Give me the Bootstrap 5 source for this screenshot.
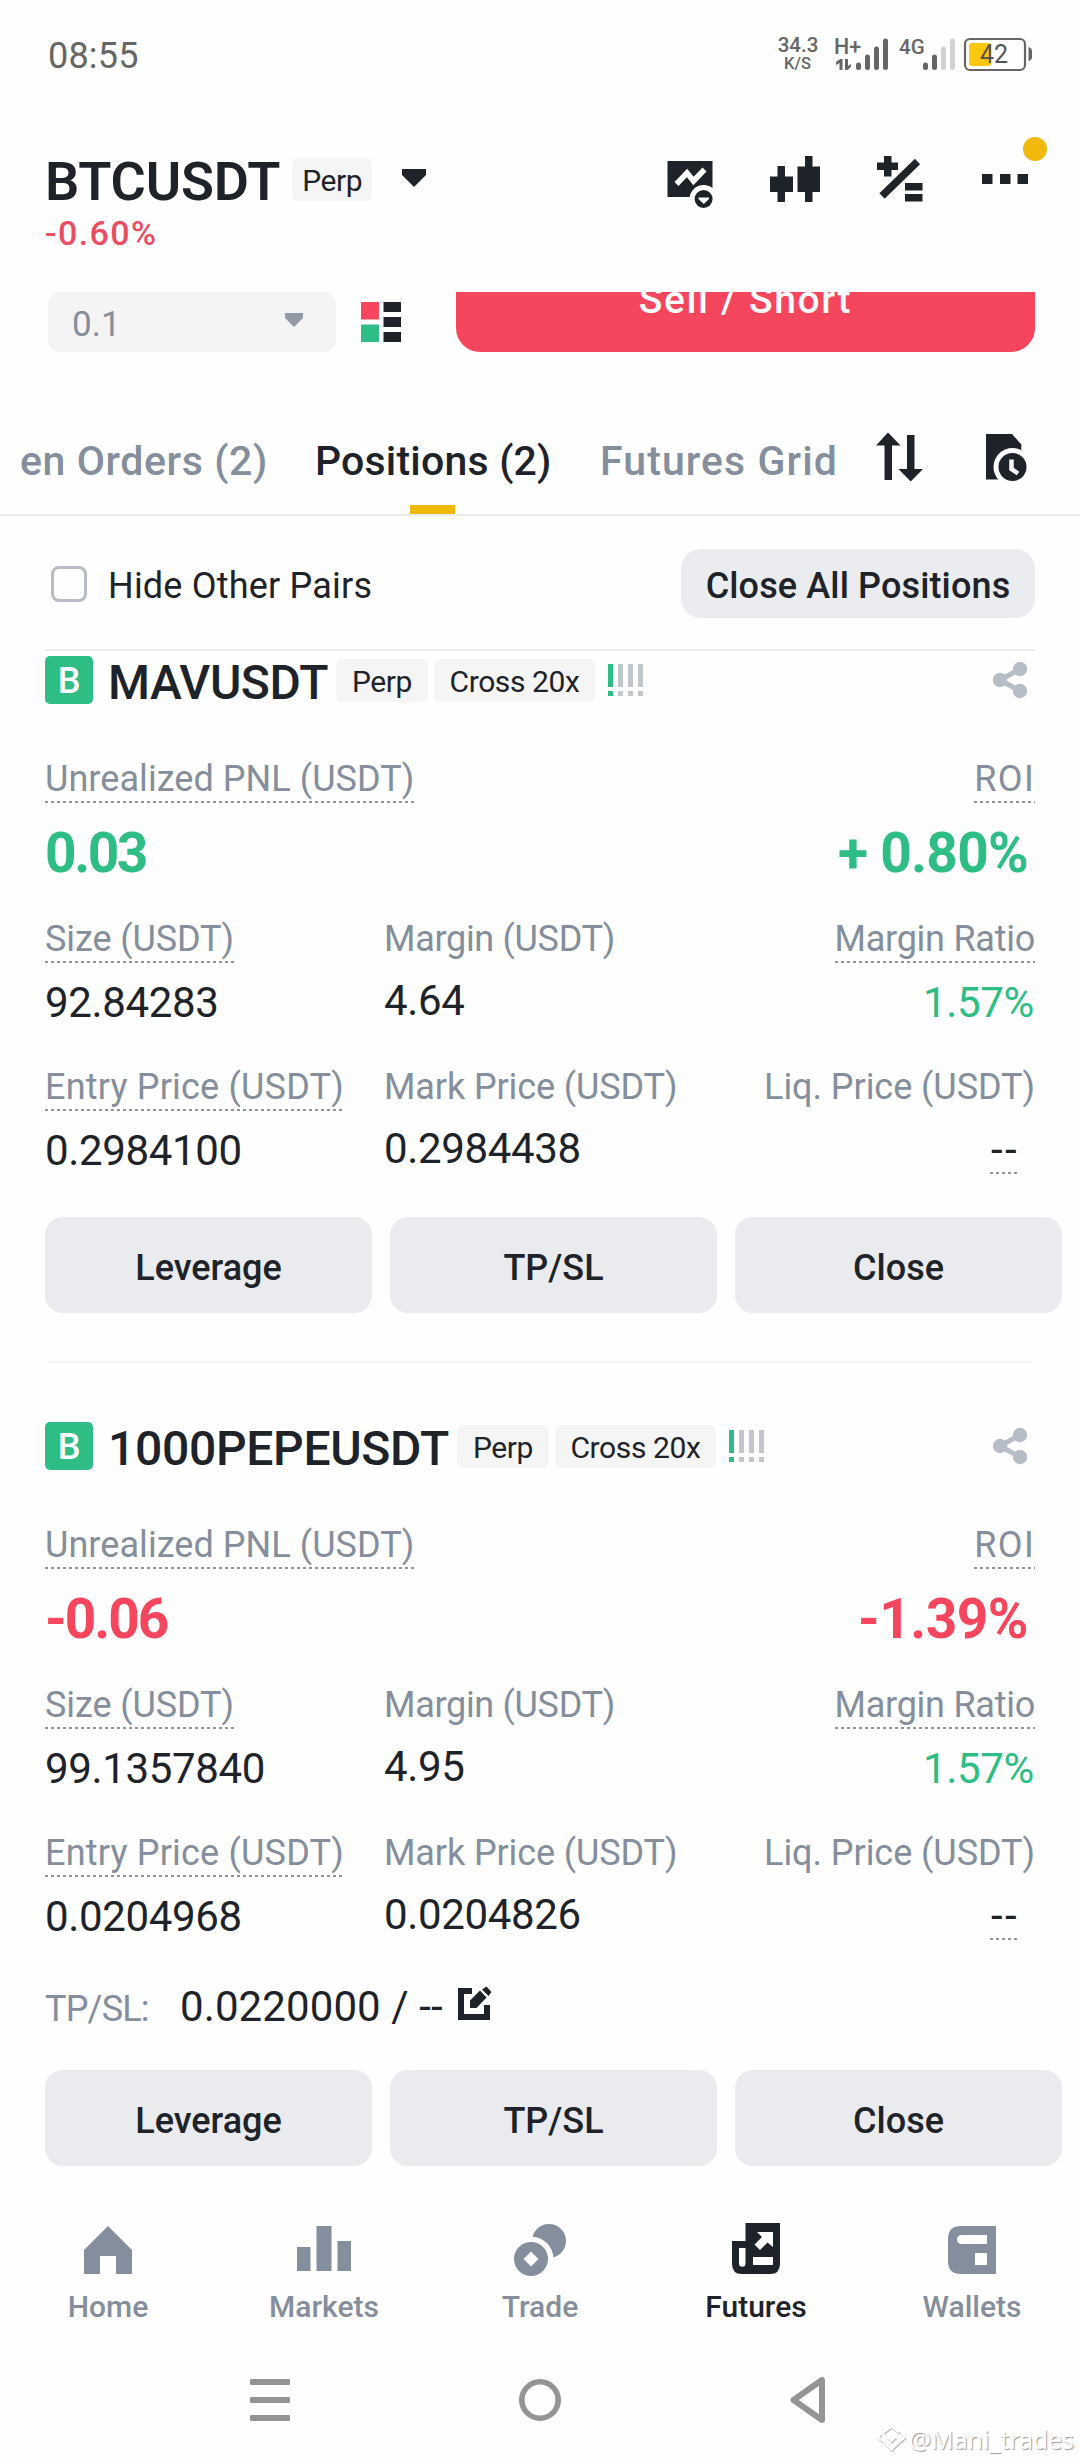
<!DOCTYPE html>
<html lang="en">
<head>
<meta charset="utf-8">
<meta name="viewport" content="width=device-width, initial-scale=1">
<title>BTCUSDT Perp</title>
<link href="https://cdn.jsdelivr.net/npm/bootstrap@5.3.0/dist/css/bootstrap.min.css" rel="stylesheet">
<style>
:root{--ink:#1e2329;--muted:#848e9c;--up:#2ebd85;--down:#f6465d;--brand:#f0b90b;--chip:#f5f5f5;--fill:#eaecef}
body{font-family:Roboto,"Liberation Sans",sans-serif;color:var(--ink);background:#fefefe;width:1080px;height:2460px;overflow:hidden;position:relative;white-space:nowrap}
svg{display:block;flex:none}
.up{color:var(--up)}.down{color:var(--down)}
.px-page{padding-left:45px;padding-right:45px}
.statusbar{height:110px;padding:0 40px 0 48px;color:#666}
.clock{font-size:36px;line-height:113px;letter-spacing:.2px}
.topbar{height:182px;padding:40px 49px 0 45px}
.pair{font-size:54px;font-weight:600;line-height:56px;padding-top:4px;letter-spacing:-.2px}
.chip{background:var(--chip);border-radius:6px;font-size:30px;line-height:45px;height:43px;letter-spacing:-.4px}
.chip-top{width:80px;margin:0 30px 2px 12px}
.change{font-size:34px;font-weight:500;line-height:40px;letter-spacing:1.4px;margin-top:3px;color:#ea4d61}
.toolset{gap:53px}
.alert-dot{width:24px;height:24px;right:33px;top:137px;background:var(--brand)}
.strip{height:60px;padding-left:48px}
.step{width:288px;background:#f4f4f4;border-radius:12px;color:var(--muted);font-size:35px;padding:6px 33px 0 24px}
.short-btn{width:579px;height:60px;margin-left:55px;background:var(--down);color:#fff;border-radius:0 0 24px 24px;font-size:39px;font-weight:500;line-height:17px;letter-spacing:1.6px;overflow:hidden}
.tabbar{height:164px;border-bottom:2px solid var(--fill);padding:0 51px 0 20px;font-size:41px;font-weight:500;line-height:60px}
.tabbar .tab-item{color:var(--muted);padding-top:79px;height:162px}
.tabbar .tab-item.active{color:var(--ink);position:relative}
.tabbar .active::after{content:"";position:absolute;left:95px;bottom:0;width:45px;height:9px;background:var(--brand)}
.filters{height:135px;margin:0 45px;border-bottom:2px solid var(--fill);padding-top:33px}
.box-check{width:36px;height:36px;border:3px solid #b7bdc6;border-radius:8px;margin-left:6px}
.filters label{font-size:36px;line-height:75px;margin-left:21px;letter-spacing:.2px}
.closeall{width:354px;height:69px;border-radius:20px;background:var(--fill);font-size:36px;font-weight:500;line-height:75px;letter-spacing:.14px}
.poshead{height:48px}
.side{width:48px;height:48px;border-radius:5px;background:var(--up);color:#fff;font-size:36px;font-weight:500;line-height:50px}
.symbol{font-size:48px;font-weight:500;line-height:56px;padding-top:6px;letter-spacing:-.45px;margin-left:15px}
.cap{color:var(--muted);font-size:36px;line-height:43px;height:45px;width:max-content}
.dots{background:repeating-linear-gradient(90deg,#8d9690 0 3px,transparent 3px 6px) left bottom/100% 2px no-repeat}
.pnl{font-size:55px;font-weight:700;line-height:62px;height:60px;margin-top:19px}
.num{font-size:42px;line-height:51px;height:50px;letter-spacing:-.35px}
.act{width:327px;height:96px;border-radius:18px;background:#eaebef;font-size:36px;font-weight:500;line-height:103px}
.acts{width:1017px;gap:18px}
.split{height:2px;background:#f2f3f4;margin:48px 48px 59px}
.c1{width:339px}
.menubar{margin-top:54px}
.menubar a{width:216px;font-size:30px;font-weight:500;line-height:30px;text-decoration:none}
.menubar span{display:block;margin-top:12px;color:var(--muted)}
.menubar .active span{color:var(--ink)}
.wm{right:6px;bottom:5px;color:#fff;font:25px/32px "Noto Sans",sans-serif;text-shadow:1px 1px 1px #999;gap:2px}
</style>
</head>
<body>

<header>
  <div class="statusbar d-flex justify-content-between">
    <div class="clock">08:55</div>
    <svg width="270" height="110" viewBox="770 0 270 110" fill="#666" font-family="Roboto,sans-serif" font-weight="500">
      <text x="798" y="51.5" font-size="20.5" text-anchor="middle">34.3</text>
      <text x="797.5" y="69" font-size="16.5" text-anchor="middle">K/S</text>
      <text x="834" y="54" font-size="21.5">H+</text>
      <path d="M836 65v-3l4-3h2.500v11h-3v-7zM845 59h3v7l3-2v3l-3.500 3H845z"/>
      <path stroke="#666" stroke-width="5" stroke-linecap="round" d="M858.500 65v2.500M867.500 57v10.500M876.500 49v18.500M885.500 41v26.500M925.500 65v2.500M934.500 57v10.500"/>
      <path stroke="#d2d2d2" stroke-width="5" stroke-linecap="round" d="M943.500 49v18.500M952.500 41v26.500"/>
      <text x="899" y="53.500" font-size="20.500">4G</text>
      <rect x="965" y="39" width="60" height="31" rx="5" fill="none" stroke="#666" stroke-width="2.200"/>
      <rect x="969" y="43" width="22" height="23" rx="3" fill="#fdc80a"/>
      <path d="M1028.500 47q3.500 1 3.500 4v6q0 3-3.500 4z"/>
      <text x="994" y="63" font-size="25" font-weight="400" text-anchor="middle" fill="#555">42</text>
    </svg>
  </div>

  <div class="topbar d-flex justify-content-between">
    <div>
      <div class="d-flex align-items-center">
        <span class="pair">BTCUSDT</span>
        <span class="chip chip-top text-center">Perp</span>
        <svg class="mb-1" width="24" height="18" viewBox="0 0 24 18" fill="#1e2329"><path d="M0 0h24v6L12 18 0 6z"/></svg>
      </div>
      <div class="change">-0.60%</div>
    </div>
    <div class="toolset d-flex">
      <svg width="52" height="60" viewBox="664 150 52 60"><path fill="#1e2329" d="M667.500 161h45v36h-45z"/><path fill="none" stroke="#fefefe" stroke-width="5.500" d="M676.500 184l10.500-11 6.500 8 11-11.500"/><circle cx="703.600" cy="199" r="14" fill="#fefefe"/><circle cx="703.600" cy="199" r="9" fill="#1e2329"/><path fill="#fefefe" d="M698.500 197.500h10.500v1.500l-5.200 5-5.300-5z"/></svg>
      <svg width="52" height="60" viewBox="769 150 52 60" fill="#1e2329"><path d="M770 176.500h7.500V166h7.500v10.500h8V192h-8v10h-7.500v-10H770zM797.500 166.500h7.500V156h7.500v10.500h7.500V192h-7.500v10H805v-10h-7.500z"/></svg>
      <svg width="52" height="60" viewBox="874 150 52 60" fill="#1e2329"><path d="M877 162.500h7V156h7.500v6.500h6.500v7.500h-6.500v6.500H884V170h-7zM905 183h17.500v7.500H905zM905 194h17.500v7.500H905z"/><path d="M882 196l35.500-34.500" stroke="#1e2329" stroke-width="7.500"/></svg>
      <svg width="52" height="60" viewBox="979 150 52 60" fill="#1e2329"><path d="M982 174h10.500v10H982zM1000 174h10.500v10H1000zM1017.500 174h10.500v10h-10.500z"/></svg>
    </div>
    <span class="alert-dot position-absolute rounded-circle"></span>
  </div>

  <div class="strip d-flex">
    <div class="step d-flex align-items-center justify-content-between"><span>0.1</span>
      <svg style="margin-bottom:10px" width="18" height="14" viewBox="0 0 18 14" fill="#929aa5"><path d="M0 0h18v5l-9 9-9-9z"/></svg></div>
    <svg class="align-self-center" style="margin-left:25px" width="40" height="40" viewBox="0 0 40 40"><path fill="#f6465d" d="M0 0h18v17.500H0z"/><path fill="#2ebd85" d="M0 22.500h18V40H0z"/><path fill="#1e2329" d="M22.500 0H40v10H22.500zM22.500 15H40v10H22.500zM22.500 30H40v10H22.500z"/></svg>
    <div class="short-btn text-center">Sell / Short</div>
  </div>
</header>

<nav class="tabbar d-flex">
  <div class="tab-item" style="width:295px;letter-spacing:.6px">en Orders (2)</div>
  <div class="tab-item active" style="width:285px;letter-spacing:.2px">Positions (2)</div>
  <div class="tab-item" style="width:273px;letter-spacing:1.1px">Futures Grid</div>
  <svg width="54" height="162" viewBox="873 352 54 162" fill="#1e2329"><path d="M888 432.500l12.500 13H892V480h-7.500v-34.500H876zM907 435h7.500v34h8.500l-12.300 12.500L898.500 469h8.500z"/></svg>
  <svg class="ms-auto" width="46" height="162" viewBox="983 352 46 162"><path fill="#1e2329" d="M986 434h26l9.300 10.500V479.500H986z"/><circle cx="1012.500" cy="467" r="19" fill="#fefefe"/><circle cx="1012.500" cy="467" r="14" fill="#1e2329"/><path fill="none" stroke="#fefefe" stroke-width="4.500" d="M1011.500 459.500v9.500l6.500 4.500"/></svg>
</nav>

<main>
  <div class="filters d-flex align-items-start">
    <span class="box-check" style="margin-top:17px"></span>
    <label>Hide Other Pairs</label>
    <div class="closeall ms-auto text-center">Close All Positions</div>
  </div>

  <section class="px-page" style="padding-top:5px">
    <div class="poshead d-flex align-items-center">
      <span class="side text-center">B</span><span class="symbol">MAVUSDT</span>
      <span class="chip text-center" style="width:92px;margin-left:8px">Perp</span>
      <span class="chip text-center" style="width:161px;margin:0 13px 0 6px">Cross 20x</span>
      <svg width="36" height="48" viewBox="0 0 36 48" fill="#c1c5cc"><path fill="#2ebd85" d="M0 8h5v23H0zM0 35h5v5H0z"/><path d="M10 8h5v23h-5zM20 8h5v23h-5zM30 8h5v23h-5zM10 35h5v5h-5zM20 35h5v5h-5zM30 35h5v5h-5z"/></svg>
      <svg class="ms-auto me-2" width="34" height="48" viewBox="993 656 34 48" fill="#b7bdc6"><path stroke="#b7bdc6" stroke-width="5" fill="none" d="M1020 669l-20 11 20 11"/><circle cx="1000" cy="680" r="7.200"/><circle cx="1020" cy="669" r="7.200"/><circle cx="1020" cy="691" r="7.200"/></svg>
    </div>
    <div class="d-flex justify-content-between" style="margin-top:54px">
      <div><div class="cap dots" style="letter-spacing:.06px">Unrealized PNL (USDT)</div><div class="pnl up" style="letter-spacing:-2.400px">0.03</div></div>
      <div><div class="cap dots ms-auto" style="letter-spacing:1.300px">ROI</div><div class="pnl up text-end" style="margin-right:7px;letter-spacing:-.7px">+ 0.80%</div></div>
    </div>
    <div class="d-flex" style="margin-top:36px">
      <div class="c1"><div class="cap dots" style="letter-spacing:-.1px">Size (USDT)</div><div class="num" style="margin-top:14px">92.84283</div></div>
      <div><div class="cap" style="letter-spacing:-.3px">Margin (USDT)</div><div class="num" style="margin-top:12px">4.64</div></div>
      <div class="ms-auto"><div class="cap dots" style="letter-spacing:-.25px">Margin Ratio</div><div class="num up text-end" style="margin-top:14px;padding-right:1px">1.57%</div></div>
    </div>
    <div class="d-flex" style="margin-top:39px">
      <div class="c1"><div class="cap dots" style="letter-spacing:.2px">Entry Price (USDT)</div><div class="num" style="margin-top:14px">0.2984100</div></div>
      <div><div class="cap" style="letter-spacing:-.1px">Mark Price (USDT)</div><div class="num" style="margin-top:12px">0.2984438</div></div>
      <div class="ms-auto"><div class="cap" style="letter-spacing:-.05px">Liq. Price (USDT)</div><div class="num dots ms-auto" style="margin:13px 18px 0;width:27px;letter-spacing:2.500px;text-indent:1px">--</div></div>
    </div>
    <div class="acts d-flex" style="margin-top:42px">
      <div class="act text-center">Leverage</div><div class="act text-center">TP/SL</div><div class="act text-center">Close</div>
    </div>
  </section>

  <div class="split"></div>

  <section class="px-page">
    <div class="poshead d-flex align-items-center">
      <span class="side text-center">B</span><span class="symbol" style="letter-spacing:-.3px">1000PEPEUSDT</span>
      <span class="chip text-center" style="width:92px;margin-left:8px">Perp</span>
      <span class="chip text-center" style="width:161px;margin:0 13px 0 6px">Cross 20x</span>
      <svg width="36" height="48" viewBox="0 0 36 48" fill="#c1c5cc"><path fill="#2ebd85" d="M0 8h5v23H0zM0 35h5v5H0z"/><path d="M10 8h5v23h-5zM20 8h5v23h-5zM30 8h5v23h-5zM10 35h5v5h-5zM20 35h5v5h-5zM30 35h5v5h-5z"/></svg>
      <svg class="ms-auto me-2" width="34" height="48" viewBox="993 656 34 48" fill="#b7bdc6"><path stroke="#b7bdc6" stroke-width="5" fill="none" d="M1020 669l-20 11 20 11"/><circle cx="1000" cy="680" r="7.200"/><circle cx="1020" cy="669" r="7.200"/><circle cx="1020" cy="691" r="7.200"/></svg>
    </div>
    <div class="d-flex justify-content-between" style="margin-top:54px">
      <div><div class="cap dots" style="letter-spacing:.06px">Unrealized PNL (USDT)</div><div class="pnl down" style="letter-spacing:-2px">-0.06</div></div>
      <div><div class="cap dots ms-auto" style="letter-spacing:1.300px">ROI</div><div class="pnl down text-end" style="margin-right:7px;letter-spacing:-.5px">-1.39%</div></div>
    </div>
    <div class="d-flex" style="margin-top:36px">
      <div class="c1"><div class="cap dots" style="letter-spacing:-.1px">Size (USDT)</div><div class="num" style="margin-top:14px">99.1357840</div></div>
      <div><div class="cap" style="letter-spacing:-.3px">Margin (USDT)</div><div class="num" style="margin-top:12px">4.95</div></div>
      <div class="ms-auto"><div class="cap dots" style="letter-spacing:-.25px">Margin Ratio</div><div class="num up text-end" style="margin-top:14px;padding-right:1px">1.57%</div></div>
    </div>
    <div class="d-flex" style="margin-top:39px">
      <div class="c1"><div class="cap dots" style="letter-spacing:.2px">Entry Price (USDT)</div><div class="num" style="margin-top:14px">0.0204968</div></div>
      <div><div class="cap" style="letter-spacing:-.1px">Mark Price (USDT)</div><div class="num" style="margin-top:12px">0.0204826</div></div>
      <div class="ms-auto"><div class="cap" style="letter-spacing:-.05px">Liq. Price (USDT)</div><div class="num dots ms-auto" style="margin:13px 18px 0;width:27px;letter-spacing:2.500px;text-indent:1px">--</div></div>
    </div>
    <div class="d-flex align-items-center" style="margin-top:40px;height:50px">
      <span class="cap pt-1" style="width:135px;letter-spacing:-.8px">TP/SL:</span><span class="num" style="letter-spacing:.1px;width:276px">0.0220000 / --</span>
      <svg width="36" height="50" viewBox="456 1981 36 50" fill="#1e2329"><path d="M458 1988h14v6h-8v20h20v-9h6v15h-32z"/><path d="M470 2008v-7.500l10-10 6.500 7L476.500 2008zM486.500 1986.500l5 5.500-3 4-6.500-6.500z"/></svg>
    </div>
    <div class="acts d-flex" style="margin-top:39px">
      <div class="act text-center">Leverage</div><div class="act text-center">TP/SL</div><div class="act text-center">Close</div>
    </div>
  </section>
</main>

<footer>
  <nav class="menubar d-flex text-center">
    <a><svg class="mx-auto" width="60" height="60" viewBox="78 2220 60 60" fill="#848e9c"><path d="M108 2226l24 24v24h-16v-18h-16v18H84v-24z"/></svg><span>Home</span></a>
    <a><svg class="mx-auto" width="60" height="60" viewBox="294 2220 60 60" fill="#848e9c"><path d="M297 2247h13.500v24H297zM316.500 2226h15v45h-15zM337.500 2241H351v30h-13.500z"/></svg><span>Markets</span></a>
    <a><svg class="mx-auto" width="60" height="60" viewBox="510 2220 60 60" fill="#848e9c"><circle cx="549" cy="2241" r="17"/><circle cx="531" cy="2259" r="22.500" fill="#fefefe"/><circle cx="531" cy="2259" r="17"/><path fill="#fefefe" d="M531 2251.500l7.500 7.500-7.500 7.500-7.500-7.500z"/></svg><span>Trade</span></a>
    <a class="active"><svg class="mx-auto" width="60" height="60" viewBox="726 2220 60 60" fill="#1e2329"><path d="M745.500 2223H780v41q0 10-10 10h-28q-10 0-10-10v-23h13.500z"/><path fill="#fefefe" d="M739 2248h6.500v15.500a3.200 3.200 0 0 1-6.500 0zM753 2257h20v8h-20zM757 2232h16v15l-5.500-4.500-7.500 7.500-5.500-5.500 7.500-7.500z"/></svg><span>Futures</span></a>
    <a><svg class="mx-auto" width="60" height="60" viewBox="942 2220 60 60"><path fill="#848e9c" d="M961 2226h35v48h-35q-13 0-13-13v-22q0-13 13-13z"/><path fill="#fefefe" d="M961.500 2235H987v9h-25.500a4.500 4.500 0 0 1 0-9zM975 2253h12v12h-12z"/></svg><span>Wallets</span></a>
  </nav>
  <div class="d-flex" style="margin:48px 0 0 240px;gap:209px">
    <svg width="60" height="60" viewBox="240 2370 60 60" fill="#949494"><rect x="250" y="2379" width="40" height="6" rx="1"/><rect x="250" y="2397" width="40" height="6" rx="1"/><rect x="250" y="2415" width="40" height="6" rx="1"/></svg>
    <svg width="60" height="60" viewBox="509 2370 60 60"><circle cx="540" cy="2400" r="18.200" fill="none" stroke="#949494" stroke-width="5.600"/></svg>
    <svg width="60" height="60" viewBox="778 2370 60 60"><path fill="none" stroke="#949494" stroke-width="6" stroke-linejoin="round" d="M793.500 2400l28.500-20v40z"/></svg>
  </div>
  <div class="wm position-absolute d-flex align-items-center">
    <svg width="30" height="26" viewBox="0 0 30 26" fill="none" stroke-width="2.400"><path stroke="#aaa" d="M7 7.500l8-6 8 6M1.500 12l4 4M28.500 12l-4 4M1.500 12l3-3M28.500 12l-3-3M11 12l4 4 4-4M6 15.500l9 9 9-9"/><path stroke="#fff" d="M6.500 6.500l8-6 8 6M1 11l4 4M28 11l-4 4M1 11l3-3M28 11l-3-3M10.500 11l4 4 4-4M5.500 14.500l9 9 9-9"/></svg>
    <span style="letter-spacing:-.1px">@Mani_trades</span>
  </div>
</footer>
<script src="https://cdn.jsdelivr.net/npm/bootstrap@5.3.0/dist/js/bootstrap.bundle.min.js"></script>
</body>
</html>
